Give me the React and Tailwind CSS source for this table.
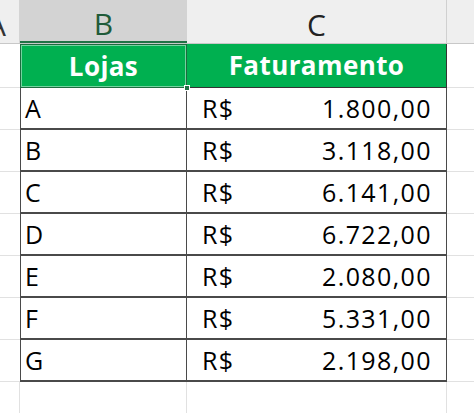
import React from 'react';

const rows = [
  { loja: 'A', valor: '1.800,00' },
  { loja: 'B', valor: '3.118,00' },
  { loja: 'C', valor: '6.141,00' },
  { loja: 'D', valor: '6.722,00' },
  { loja: 'E', valor: '2.080,00' },
  { loja: 'F', valor: '5.331,00' },
  { loja: 'G', valor: '2.198,00' },
];

const font = { fontFamily: '"Open Sans", "Noto Sans", sans-serif' };

export default function App() {
  return (
    <div className="w-[474px] h-[413px] overflow-hidden bg-white" style={font}>
      {/* Column letters */}
      <div className="flex h-[44px] bg-[#efefef] border-b border-[#c8c8c8]">
        <div className="w-[20px] overflow-hidden flex justify-end items-center pr-[13px] pt-[5px] border-r border-[#d4d4d4] text-[30px] text-[#333] shrink-0">
          <span>A</span>
        </div>
        <div className="w-[167px] shrink-0 bg-[#d3d3d3] border-b-2 border-[#217346] flex items-center justify-center pt-[5px] text-[30px] text-[#1f5b39]">
          B
        </div>
        <div className="w-[260px] shrink-0 border-r border-[#d0d0d0] flex items-center justify-center pt-[5px] text-[30px] text-[#222]">
          C
        </div>
        <div className="flex-1" />
      </div>

      {/* Green title row */}
      <div className="flex h-[44px]">
        <div className="w-[20px] shrink-0 border-b border-[#e1e1e1]" />
        <div className="relative w-[167px] shrink-0 bg-[#00b050] border border-[#1d6b3f] shadow-[inset_0_0_0_1px_rgba(255,255,255,0.45)] flex items-center justify-center text-white font-bold text-[26px] tracking-[0.4px]">
          Lojas
          <div className="absolute -right-[4px] -bottom-[4px] w-[6px] h-[6px] bg-[#217346] border border-white z-10" />
        </div>
        <div className="w-[260px] shrink-0 bg-[#00b050] border-r border-b border-[#333] flex items-center justify-center text-white font-bold text-[26px] tracking-[0.4px]">
          Faturamento
        </div>
        <div className="flex-1 border-b border-[#e1e1e1]" />
      </div>

      {/* Data rows */}
      {rows.map((r) => (
        <div key={r.loja} className="flex h-[42px]">
          <div className="w-[20px] shrink-0 border-b border-[#e1e1e1]" />
          <div className="w-[167px] shrink-0 border-l border-r border-b-2 border-[#4a4a4a] flex items-center pl-[4px] pt-[2px] text-[25px] text-black tracking-[1px]">
            {r.loja}
          </div>
          <div className="w-[260px] shrink-0 border-r border-b-2 border-[#4a4a4a] flex items-center justify-between pl-[15px] pr-[14px] pt-[2px] text-[25px] text-black tracking-[1.4px]">
            <span>R$</span>
            <span>{r.valor}</span>
          </div>
          <div className="flex-1 border-b border-[#e1e1e1]" />
        </div>
      ))}

      {/* Empty row */}
      <div className="flex h-[31px]">
        <div className="w-[20px] shrink-0 border-r border-[#e1e1e1]" />
        <div className="w-[167px] shrink-0 border-r border-[#e1e1e1]" />
        <div className="w-[260px] shrink-0 border-r border-[#e1e1e1]" />
        <div className="flex-1" />
      </div>
    </div>
  );
}
